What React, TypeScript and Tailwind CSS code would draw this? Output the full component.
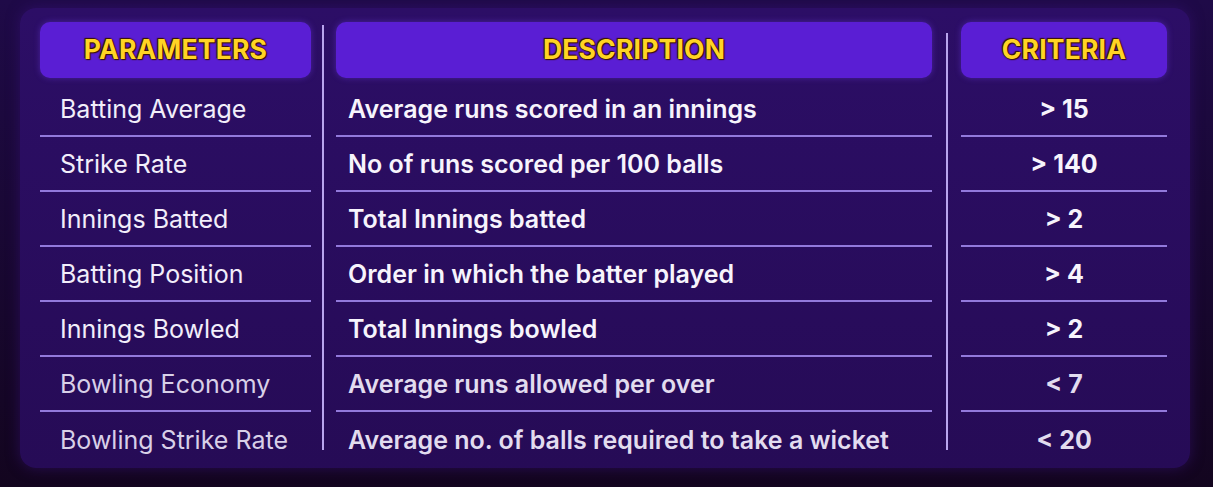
import React from "react";

const rows = [
  { p: "Batting Average", d: "Average runs scored in an innings", c: "> 15" },
  { p: "Strike Rate", d: "No of runs scored per 100 balls", c: "> 140" },
  { p: "Innings Batted", d: "Total Innings batted", c: "> 2" },
  { p: "Batting Position", d: "Order in which the batter played", c: "> 4" },
  { p: "Innings Bowled", d: "Total Innings bowled", c: "> 2" },
  { p: "Bowling Economy", d: "Average runs allowed per over", c: "< 7" },
  { p: "Bowling Strike Rate", d: "Average no. of balls required to take a wicket", c: "< 20" },
];

const headerCls =
  "h-[56px] rounded-[10px] bg-[#5a1ed4] shadow-[0_0_6px_rgba(110,60,230,0.45)] flex items-center text-[26.5px] font-bold text-[#ffd424] tracking-[0.2px] [text-shadow:0_0_1px_#3a1500,0_0_2px_#3a1500,1px_1px_1px_#3a1500,-1px_-1px_1px_#3a1500]";

export default function App() {
  return (
    <div
      className="w-[1213px] h-[487px] overflow-hidden bg-gradient-to-b from-[#1f0a48] to-[#13051f] pt-[8px] pl-[20px]"
      style={{ fontFamily: "Inter, 'Noto Sans', sans-serif" }}
    >
      <div className="w-[1170px] h-[460px] rounded-[16px] bg-gradient-to-b from-[#2c0e66] to-[#260b56] shadow-[0_0_14px_rgba(60,20,130,0.5)] pl-[20px] pt-[14px] flex">
        {/* Parameters column */}
        <div className="w-[271px] flex flex-col">
          <div className={headerCls + " justify-center"}>PARAMETERS</div>
          <div className="mt-[4px] flex flex-col">
            {rows.map((r, i) => (
              <div
                key={i}
                className={
                  "h-[55px] flex items-center pl-[20px] pt-[2px] text-[25px] font-normal " +
                  (i < rows.length - 1 ? "border-b-2 border-[#9279dc] " : "") +
                  (i >= 5 ? "text-[#d8d0e8]" : "text-[#f2eefa]")
                }
              >
                {r.p}
              </div>
            ))}
          </div>
        </div>
        {/* divider */}
        <div className="ml-[11px] mt-[3px] w-[2px] h-[425px] bg-[#b9a5ee]" />
        {/* Description column */}
        <div className="ml-[12px] w-[596px] flex flex-col">
          <div className={headerCls + " justify-center"}>DESCRIPTION</div>
          <div className="mt-[4px] flex flex-col">
            {rows.map((r, i) => (
              <div
                key={i}
                className={
                  "h-[55px] flex items-center pl-[12px] pt-[2px] text-[25px] font-semibold " +
                  (i < rows.length - 1 ? "border-b-2 border-[#9279dc] " : "") +
                  (i >= 5 ? "text-[#e2dcef]" : "text-[#f7f4fc]")
                }
              >
                {r.d}
              </div>
            ))}
          </div>
        </div>
        {/* divider */}
        <div className="ml-[14px] mt-[11px] w-[2px] h-[417px] bg-[#b9a5ee]" />
        {/* Criteria column */}
        <div className="ml-[13px] w-[206px] flex flex-col">
          <div className={headerCls + " justify-center"}>CRITERIA</div>
          <div className="mt-[4px] flex flex-col">
            {rows.map((r, i) => (
              <div
                key={i}
                className={
                  "h-[55px] flex items-center justify-center pt-[2px] text-[25px] font-bold " +
                  (i < rows.length - 1 ? "border-b-2 border-[#9279dc] " : "") +
                  (i >= 5 ? "text-[#e2dcef]" : "text-[#f7f4fc]")
                }
              >
                {r.c}
              </div>
            ))}
          </div>
        </div>
      </div>
    </div>
  );
}
